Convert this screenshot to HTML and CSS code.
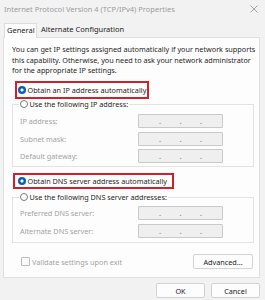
FILE: index.html
```html
<!DOCTYPE html>
<html>
<head>
<meta charset="utf-8">
<link rel="stylesheet" href="styles.css">
</head>
<body>
<div class="window">
  <div class="titlebar">
    <span class="title">Internet Protocol Version 4 (TCP/IPv4) Properties</span>
    <svg class="close" width="8" height="8" viewBox="0 0 8 8"><path d="M0.5 0.5L7.5 7.5M7.5 0.5L0.5 7.5" stroke="#9a9a9a" stroke-width="0.9" fill="none"/></svg>
  </div>
  <div class="tabs">
    <div class="tab active">General</div>
    <div class="tab">Alternate Configuration</div>
  </div>
  <div class="panel">
    <p class="intro">You can get IP settings assigned automatically if your network supports this capability. Otherwise, you need to ask your network administrator for the appropriate IP settings.</p>

    <div class="mark mark-ip">
      <span class="radio checked"></span><span>Obtain an IP address automatically</span>
    </div>

    <fieldset class="group group-ip">
      <legend class="legend"><span class="radio"></span><span>Use the following IP address:</span></legend>
      <div class="row"><span class="lbl">IP address:</span><span class="ipbox"><i>.</i><i>.</i><i>.</i></span></div>
      <div class="row"><span class="lbl">Subnet mask:</span><span class="ipbox"><i>.</i><i>.</i><i>.</i></span></div>
      <div class="row"><span class="lbl">Default gateway:</span><span class="ipbox"><i>.</i><i>.</i><i>.</i></span></div>
    </fieldset>

    <div class="mark mark-dns">
      <span class="radio checked"></span><span>Obtain DNS server address automatically</span>
    </div>

    <fieldset class="group group-dns">
      <legend class="legend"><span class="radio"></span><span>Use the following DNS server addresses:</span></legend>
      <div class="row"><span class="lbl">Preferred DNS server:</span><span class="ipbox"><i>.</i><i>.</i><i>.</i></span></div>
      <div class="row"><span class="lbl">Alternate DNS server:</span><span class="ipbox"><i>.</i><i>.</i><i>.</i></span></div>
    </fieldset>

    <div class="bottomrow">
      <div class="check"><span class="box"></span><span>Validate settings upon exit</span></div>
      <div class="btn adv">Advanced...</div>
    </div>
  </div>
  <div class="footer">
    <div class="btn ok">OK</div>
    <div class="btn cancel">Cancel</div>
  </div>
</div>
</body>
</html>
```
FILE: styles.css
```css
* { box-sizing: border-box; }
html, body { margin: 0; padding: 0; }
body {
  width: 265px;
  height: 300px;
  overflow: hidden;
  background: #f2f2f2;
  font-family: "Noto Sans", "Open Sans", sans-serif;
  font-size: 7.25px;
  color: #1f1f1f;
}
.window { display: flex; flex-direction: column; height: 300px; }
.titlebar {
  height: 17px;
  display: flex;
  align-items: center;
  justify-content: space-between;
  padding: 0 7px 0 4px;
}
.title { color: #9c9c9c; font-size: 7.5px; }
.tabs {
  display: flex;
  margin-top: 6px;
  padding-left: 4px;
  height: 14px;
  position: relative;
  z-index: 1;
}
.tab {
  height: 14px;
  line-height: 13px;
  padding: 0 3px 0 4px;
  color: #222;
  white-space: nowrap;
  font-size: 7.5px;
}
.tab.active {
  background: #fdfdfd;
  border: 1px solid #dcdcdc;
  border-bottom: none;
  height: 15px;
  width: 33px;
  padding: 0 0 0 2px;
}
.panel {
  height: 241px;
  margin: 0 5px 0 3px;
  background: #fdfdfd;
  border: 1px solid #e0e0e0;
  display: flex;
  flex-direction: column;
}
.intro {
  margin: 6px 0 0 8px;
  line-height: 10.5px;
  width: 244px;
}
.mark {
  border: 2px solid #d0202c;
  display: flex;
  align-items: center;
  gap: 1.5px;
  padding-left: 1px;
  white-space: nowrap;
}
.mark-ip { margin: 5.5px 0 0 11px; width: 134px; height: 18px; }
.mark-dns { margin: 6px 0 0 9px; width: 161px; height: 16px; padding-left: 3px; }
.radio {
  width: 8px;
  height: 8px;
  border-radius: 50%;
  border: 1px solid #7a7a7a;
  background: #fff;
  flex: none;
}
.radio.checked {
  border: none;
  background: radial-gradient(circle, #fff 0 1.3px, #0a5fb4 1.8px);
}
.group {
  margin: 0 5px 0 8px;
  border: 1px solid #e3e3e3;
  padding: 5px 0 3px 7px;
  min-width: 0;
}
.group-dns { margin-top: 3px; padding-top: 4px; padding-bottom: 4px; }
.legend {
  height: 10px;
  line-height: 10px;
  display: flex;
  align-items: center;
  gap: 1.5px;
  padding: 0 1px;
  margin-left: -1px;
  white-space: nowrap;
}
.row {
  display: grid;
  grid-template-columns: 118px 85px;
  align-items: center;
  height: 14px;
  margin-bottom: 3.5px;
}
.row:last-child { margin-bottom: 0; }
.lbl { color: #a3a3a3; white-space: nowrap; }
.ipbox {
  height: 14px;
  background: #efefef;
  border: 1px solid #c9c9c9;
  border-radius: 1px;
  display: flex;
  justify-content: space-between;
  padding: 0 20px;
  line-height: 13px;
  color: #8a8a8a;
  font-weight: bold;
}
.ipbox i { font-style: normal; }
.bottomrow {
  display: flex;
  align-items: center;
  justify-content: space-between;
  margin: 12px 6px 0 17px;
  height: 14px;
}
.check { display: flex; align-items: center; gap: 2px; color: #a3a3a3; }
.box {
  width: 9px;
  height: 9px;
  border: 1px solid #bdbdbd;
  border-radius: 1px;
  background: #fafafa;
}
.btn {
  display: flex;
  align-items: center;
  justify-content: center;
  background: #fdfdfd;
  border: 1px solid #d3d3d3;
  border-radius: 2px;
  color: #222;
}
.adv { width: 60px; height: 15px; }
.footer {
  display: flex;
  justify-content: flex-end;
  gap: 6px;
  padding: 5px 5px 0 0;
}
.ok, .cancel { width: 49px; height: 15px; }
```
